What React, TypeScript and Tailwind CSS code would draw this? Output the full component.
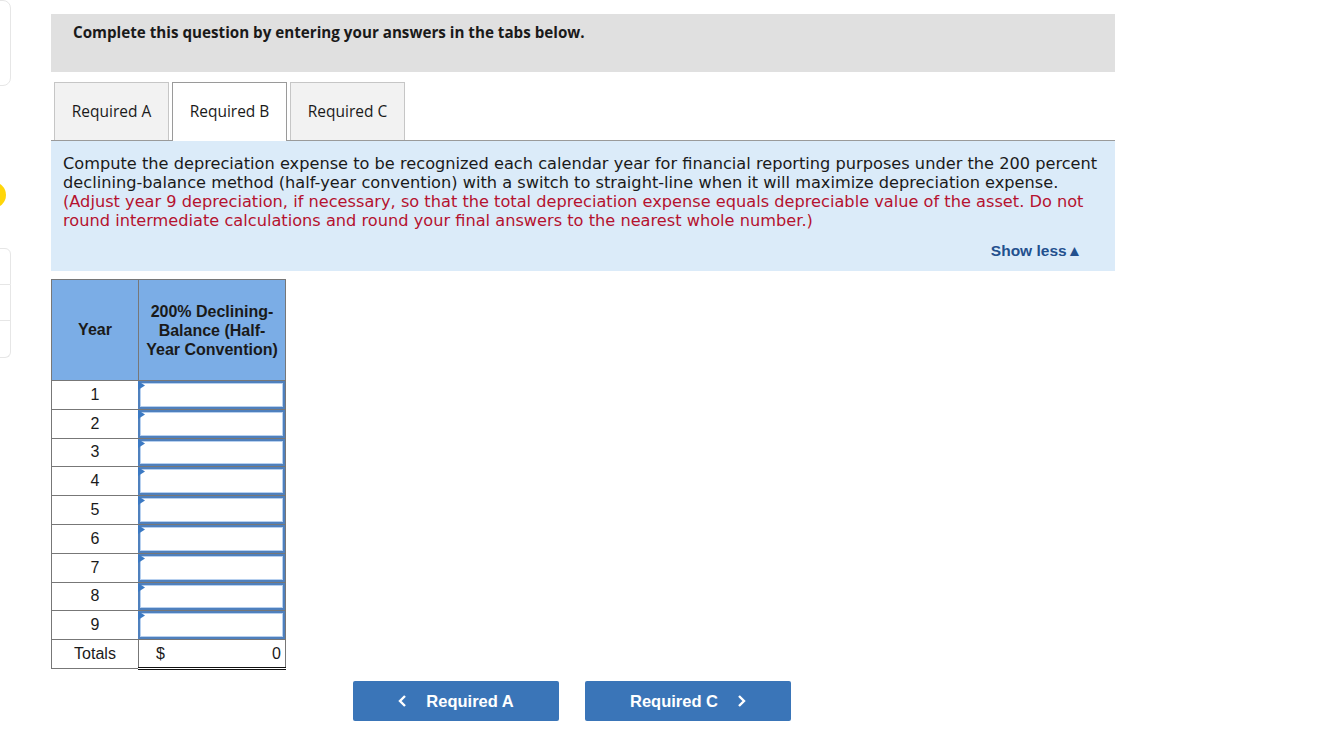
import React from "react";

const years = [1, 2, 3, 4, 5, 6, 7, 8, 9];

function SideRail() {
  return (
    <div className="w-[12px] shrink-0 overflow-hidden">
      <div className="-ml-[20px] h-[86px] w-[31px] rounded-[8px] border border-[#e6e6e6]" />
      <div className="mt-[96px] -ml-[20px] h-[26px] w-[26px] rounded-full bg-[#ffd60a]" />
      <div className="mt-[40px] -ml-[20px] w-[31px]">
        <div className="h-[37px] rounded-t-[6px] border border-[#e6e6e6]" />
        <div className="h-[36px] border-x border-b border-[#e6e6e6]" />
        <div className="h-[37px] rounded-b-[6px] border-x border-b border-[#e6e6e6]" />
      </div>
    </div>
  );
}

function Tab({ label, active }: { label: string; active?: boolean }) {
  return (
    <div
      className={
        active
          ? "-mb-px flex h-[59px] w-[115px] items-center justify-center border border-b-0 border-[#9a9a9a] bg-white"
          : "flex h-[58px] w-[115px] items-center justify-center border border-b-0 border-[#c6c6c6] bg-[#f2f2f2]"
      }
    >
      <span className="text-[15.5px] text-[#1a1a1a]">{label}</span>
    </div>
  );
}

function AnswerInput() {
  return (
    <div className="relative -ml-px h-full border-2 border-[#4f80bd] bg-white">
      <div className="h-full border border-[#b7d0ef]" />
      <svg className="absolute -left-[2px] -top-[2px]" width="8" height="10" viewBox="0 0 8 10">
        <polygon points="0,0 7,4.5 0,9" fill="#3b79c3" />
      </svg>
    </div>
  );
}

export default function App() {
  return (
    <div className="flex min-h-[751px] bg-white font-['Open_Sans',sans-serif]">
      <SideRail />
      <div className="ml-[39px] w-[1064px] pt-[14px]">
        <div className="h-[58px] bg-[#e0e0e0] pl-[22px] pt-[7px]">
          <p className="text-[15.2px] font-bold text-[#1a1a1a]">
            Complete this question by entering your answers in the tabs below.
          </p>
        </div>

        <div className="mt-[10px] flex gap-[3px] border-b border-[#9a9a9a] pl-[3px]">
          <Tab label="Required A" />
          <Tab label="Required B" active />
          <Tab label="Required C" />
        </div>

        <div className="h-[130px] bg-[#dbebf9] px-[12px] pt-[13px] font-['DejaVu_Sans',Verdana,sans-serif] text-[16.2px] leading-[19px]">
          <p className="text-[#1a1a1a]">
            Compute the depreciation expense to be recognized each calendar year for financial reporting purposes under
            the 200 percent declining-balance method (half-year convention) with a switch to straight-line when it will
            maximize depreciation expense.
          </p>
          <p className="text-[#b5122f]">
            (Adjust year 9 depreciation, if necessary, so that the total depreciation expense equals depreciable value of
            the asset. Do not round intermediate calculations and round your final answers to the nearest whole number.)
          </p>
          <div className="mt-[11px] flex justify-end pr-[21px]">
            <span className="font-['Liberation_Sans',Arial,sans-serif] text-[15.5px] font-bold text-[#23508e]">
              Show less▲
            </span>
          </div>
        </div>

        <table className="mt-[8px] border-collapse font-['Liberation_Sans',Arial,sans-serif] text-[16px] text-[#1a1a1a]">
          <thead>
            <tr className="h-[101px] bg-[#7badE6]">
              <th className="w-[87px] border border-[#777] font-bold">Year</th>
              <th className="w-[147px] border border-[#777] px-[6px] font-bold leading-[19px]">
                200% Declining-Balance (Half-Year Convention)
              </th>
            </tr>
          </thead>
          <tbody>
            {years.map((y) => (
              <tr key={y} className="h-[28.8px]">
                <td className="border border-[#777] text-center text-[16px]">{y}</td>
                <td className="h-[28.8px] border border-[#777] p-0">
                  <AnswerInput />
                </td>
              </tr>
            ))}
            <tr className="h-[28.8px]">
              <td className="border border-[#777] text-center text-[16px]">Totals</td>
              <td className="border-x border-t border-b-[3px] border-double border-x-[#777] border-t-[#777] border-b-[#111] px-[4px] text-[16px]">
                <div className="flex justify-between pl-[13px]">
                  <span>$</span>
                  <span>0</span>
                </div>
              </td>
            </tr>
          </tbody>
        </table>

        <div className="mt-[11px] flex gap-[26px] pl-[302px] font-['Liberation_Sans',Arial,sans-serif]">
          <button className="flex h-[40px] w-[206px] items-center justify-center gap-[18px] rounded-[2px] bg-[#3a75b8] text-[16.5px] font-bold text-white">
            <svg width="10" height="14" viewBox="0 0 10 14">
              <polyline points="7,2 2,7 7,12" fill="none" stroke="white" strokeWidth="2.4" />
            </svg>
            Required A
          </button>
          <button className="flex h-[40px] w-[206px] items-center justify-center gap-[18px] rounded-[2px] bg-[#3a75b8] text-[16.5px] font-bold text-white">
            Required C
            <svg width="10" height="14" viewBox="0 0 10 14">
              <polyline points="3,2 8,7 3,12" fill="none" stroke="white" strokeWidth="2.4" />
            </svg>
          </button>
        </div>
      </div>
    </div>
  );
}
